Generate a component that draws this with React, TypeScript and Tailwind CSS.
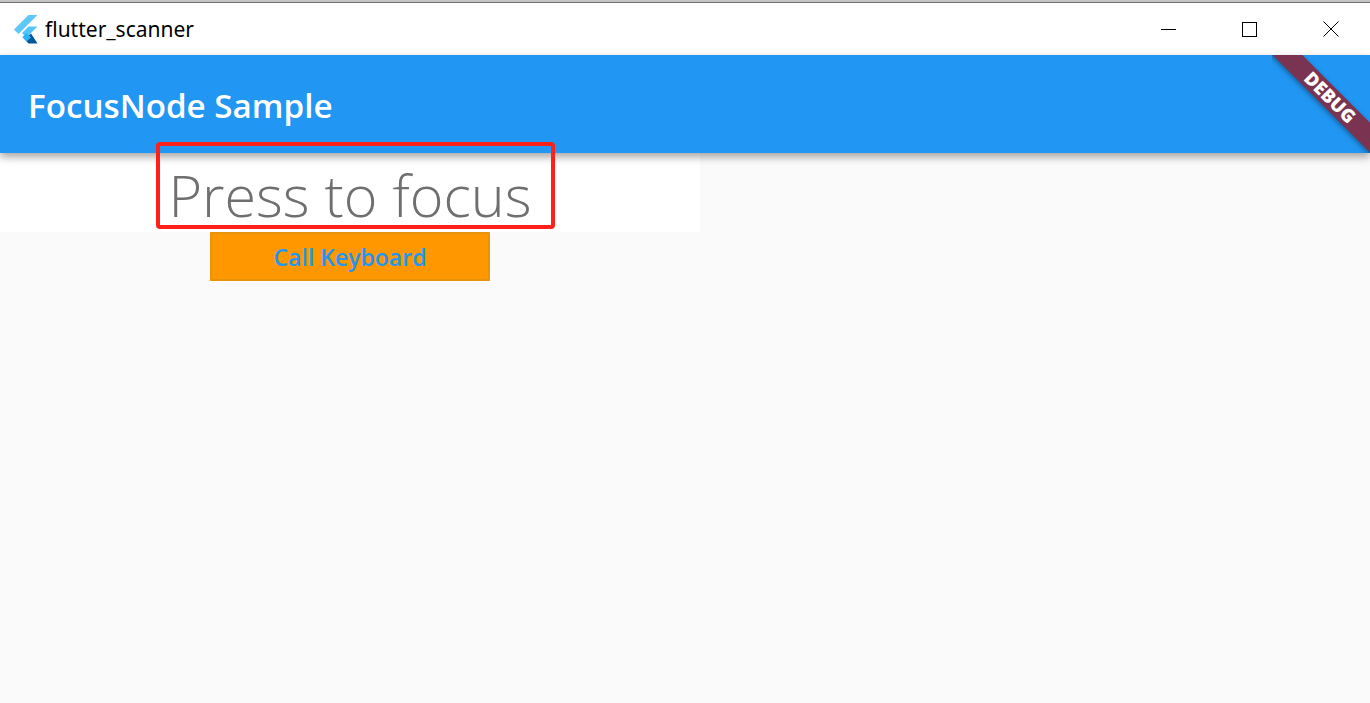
function FlutterLogo() {
  return (
    <svg width="24" height="29" viewBox="0 0 24 29" className="shrink-0">
      <polygon points="0,14.5 14.5,0 23.5,0 4.5,19" fill="#5ec7f8" />
      <polygon points="8,18 14.5,11.5 23.5,11.5 12.5,22.5" fill="#54c5f8" />
      <polygon points="12.5,22.5 17,18.5 23.5,28.5 14.5,28.5 8.5,22" fill="#01579b" />
      <polygon points="8.5,22 12.5,18 17,22.5 12.5,26.5" fill="#29b6f6" />
    </svg>
  );
}

export default function App() {
  return (
    <div className="relative flex h-[703px] w-[1370px] flex-col overflow-hidden bg-[#fafafa] font-['Open_Sans','Noto_Sans',sans-serif]">
      <div className="h-[3px] shrink-0 bg-[#c4c4c4] border-b border-[#6e6e6e]" />

      {/* window title bar */}
      <div className="flex h-[52px] shrink-0 items-center justify-between bg-white">
        <div className="flex items-center gap-[7px] pl-[14px]">
          <FlutterLogo />
          <span className="text-[21px] leading-none text-black font-['Noto_Sans',sans-serif]">flutter_scanner</span>
        </div>
        <div className="-mr-px flex items-center">
          <div className="flex h-[52px] w-[81px] items-center justify-center">
            <div className="h-px w-[15px] bg-black" />
          </div>
          <div className="flex h-[52px] w-[81px] items-center justify-center">
            <div className="h-[15px] w-[15px] border border-black" />
          </div>
          <div className="flex h-[52px] w-[81px] items-center justify-center">
            <svg width="16" height="16" viewBox="0 0 16 16">
              <path d="M0.5 0.5 L15.5 15.5 M15.5 0.5 L0.5 15.5" stroke="#000" strokeWidth="1" fill="none" />
            </svg>
          </div>
        </div>
      </div>

      {/* app bar */}
      <div className="relative z-10 flex h-[98px] shrink-0 items-center bg-[#2196f3] pl-[28px] pt-[4px] shadow-[0_4px_8px_rgba(0,0,0,0.35)]">
        <h1 className="text-[33.2px] font-semibold leading-none text-white">FocusNode Sample</h1>

        {/* debug banner */}
        <div className="absolute right-0 top-0 h-[98px] w-[98px] overflow-hidden">
          <div className="absolute left-[-17px] top-[32px] flex h-[20.5px] w-[150px] rotate-45 items-center justify-center bg-[#7a3350] text-[18.5px] font-extrabold leading-none text-white shadow-[0_2px_5px_rgba(0,0,0,0.35)]">
            DEBUG
          </div>
        </div>
      </div>

      {/* body */}
      <div className="flex w-[700px] flex-col items-center">
        <div className="flex h-[79px] w-full items-center justify-center bg-white pt-[7px]">
          <span className="text-[57.5px] font-light leading-none text-[#6f6f6f]">Press to focus</span>
        </div>
        <button type="button" className="h-[49px] w-[280px] bg-[#ff9800]">
          <div className="flex h-full w-full items-center justify-center rounded-[4px] border-2 border-[#e8930c] pt-px text-[23px] font-semibold leading-none text-[#2196f3]">
            Call Keyboard
          </div>
        </button>
      </div>

      {/* red annotation box */}
      <div className="absolute left-[156px] top-[142px] z-20 h-[87px] w-[399px] rounded-[4px] border-[4px] border-[#ff2119]" />
    </div>
  );
}
